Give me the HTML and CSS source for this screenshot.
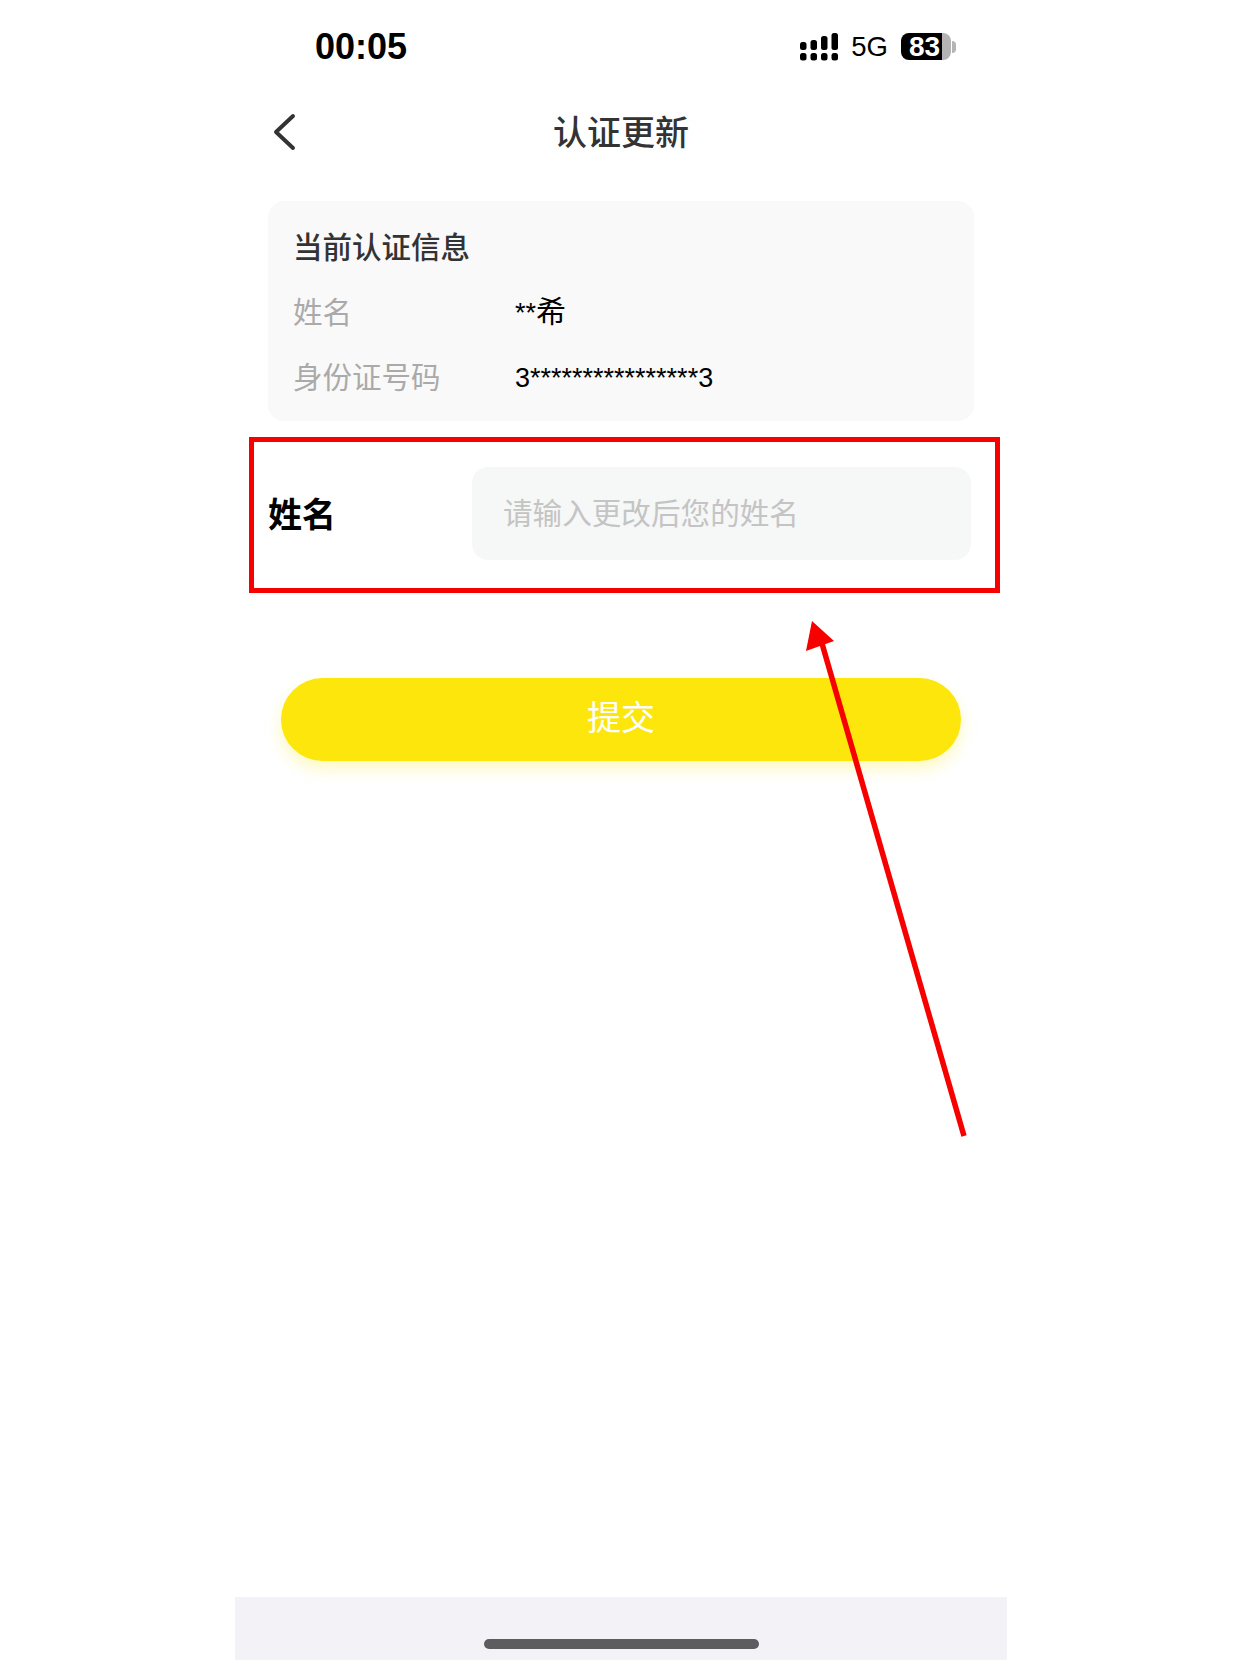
FILE: index.html
```html
<!DOCTYPE html>
<html lang="zh-CN">

<head>
    <meta charset="UTF-8">
    <title>认证更新</title>
    <link rel="stylesheet" href="styles.css">
</head>

<body>
    <div class="phone">
        <div class="statusBar">
            <span class="time">00:05</span>
            <div class="statusRight">
                <svg class="signal" width="38" height="28" viewBox="0 0 38 28">
                    <rect x="0" y="9" width="6.5" height="8" rx="2.5" />
                    <rect x="10.5" y="7" width="6.5" height="10" rx="2.5" />
                    <rect x="21" y="3" width="6.5" height="14" rx="2.5" />
                    <rect x="31.5" y="0" width="6.5" height="17" rx="2.5" />
                    <rect x="0" y="20" width="6.5" height="7.5" rx="2.5" />
                    <rect x="10.5" y="20" width="6.5" height="7.5" rx="2.5" />
                    <rect x="21" y="20" width="6.5" height="7.5" rx="2.5" />
                    <rect x="31.5" y="20" width="6.5" height="7.5" rx="2.5" />
                </svg>
                <span class="net">5G</span>
                <div class="battery">
                    <div class="batteryBody"><span class="batteryNum">83</span></div>
                    <div class="batteryNub"></div>
                </div>
            </div>
        </div>

        <div class="nav">
            <svg class="backIcon" width="24" height="38" viewBox="0 0 24 38">
                <path d="M21 3 L4 19 L21 35" />
            </svg>
            <span class="navTitle">认证更新</span>
        </div>

        <div class="infoCard">
            <div class="infoTitle">当前认证信息</div>
            <div class="infoRow">
                <span class="infoLabel">姓名</span>
                <span class="infoValue">**<span class="infoHan">希</span></span>
            </div>
            <div class="infoRow">
                <span class="infoLabel">身份证号码</span>
                <span class="infoValue">3****************3</span>
            </div>
        </div>

        <div class="formBox">
            <span class="formLabel">姓名</span>
            <div class="formInput">请输入更改后您的姓名</div>
        </div>

        <div class="submitBtn">提交</div>

        <div class="spacer"></div>

        <div class="homeBar">
            <div class="homeIndicator"></div>
        </div>

        <!-- 标注箭头 -->
        <svg class="arrow" width="772" height="1660" viewBox="0 0 772 1660">
            <line x1="729" y1="1136" x2="586" y2="640" />
            <polygon points="577,621 571,651 599,641" />
        </svg>
    </div>
</body>

</html>
```

FILE: styles.css
```css
* {
    margin: 0;
    padding: 0;
    box-sizing: border-box;
}

body {
    background-color: #fff;
    font-family: "Liberation Sans", "Noto Sans CJK SC", sans-serif;
    overflow: hidden;
}

.phone {
    position: relative;
    width: 772px;
    height: 1660px;
    margin: 0 auto;
    display: flex;
    flex-direction: column;
    background-color: #fff;
}

.statusBar {
    height: 93px;
    padding: 0 51px 0 80px;
    display: flex;
    justify-content: space-between;
    align-items: center;
}

.time {
    font-size: 36px;
    font-weight: 700;
    color: #000;
}

.statusRight {
    display: flex;
    align-items: center;
}

.signal {
    fill: #000;
    margin-right: 13px;
}

.net {
    font-size: 27.5px;
    color: #000;
    margin-right: 13px;
}

.battery {
    display: flex;
    align-items: center;
}

.batteryBody {
    width: 50px;
    height: 27px;
    border-radius: 8px;
    background: linear-gradient(to right, #000 82%, #b4b4b4 82%);
    display: flex;
    align-items: center;
    padding-left: 8px;
}

.batteryNum {
    font-size: 28px;
    font-weight: 700;
    color: #fff;
    line-height: 27px;
}

.batteryNub {
    width: 4px;
    height: 12px;
    margin-left: 1px;
    border-radius: 0 4px 4px 0;
    background-color: #b4b4b4;
}

.nav {
    height: 78px;
    position: relative;
    display: flex;
    justify-content: center;
    align-items: center;
}

.backIcon {
    position: absolute;
    left: 37px;
    top: 20px;
    fill: none;
    stroke: #333;
    stroke-width: 4;
    stroke-linecap: round;
    stroke-linejoin: round;
}

.navTitle {
    font-size: 34px;
    font-weight: 500;
    color: #333;
    line-height: 40px;
    margin-top: 2px;
}

.infoCard {
    width: 706px;
    height: 220px;
    margin: 30px 0 0 33px;
    padding: 26px 25px 0;
    background-color: #f9f9f9;
    border-radius: 16px;
}

.infoTitle {
    font-size: 29.5px;
    font-weight: 500;
    color: #333;
    line-height: 42px;
    margin-bottom: 11px;
}

.infoRow {
    height: 65px;
    display: flex;
    align-items: center;
}

.infoLabel {
    width: 222px;
    font-size: 29.5px;
    line-height: 36px;
    color: #aaa;
}

.infoValue {
    font-size: 27px;
    line-height: 36px;
    color: #000;
}

.infoHan {
    font-size: 30px;
}

.formBox {
    width: 751px;
    height: 156px;
    margin: 16px 0 0 14px;
    padding: 0 24px 4px 14px;
    border: 5px solid #f60000;
    display: flex;
    justify-content: space-between;
    align-items: center;
}

.formLabel {
    font-size: 34px;
    font-weight: 700;
    color: #000;
    margin-bottom: 2px;
}

.formInput {
    width: 499px;
    height: 93px;
    padding-left: 31px;
    background-color: #f6f7f7;
    border-radius: 16px;
    font-size: 29.6px;
    line-height: 93px;
    color: #c4c4c4;
}

.submitBtn {
    width: 680px;
    height: 83px;
    margin: 85px 0 0 46px;
    background-color: #fde60c;
    border-radius: 42px;
    box-shadow: 0 8px 16px rgba(253, 230, 12, 0.25);
    font-size: 34px;
    color: #fff;
    line-height: 80px;
    text-align: center;
}

.spacer {
    flex: 1;
}

.homeBar {
    height: 63px;
    padding-top: 42px;
    background-color: #f3f3f7;
    display: flex;
    justify-content: center;
}

.homeIndicator {
    width: 275px;
    height: 10px;
    border-radius: 5px;
    background-color: #5d5d5f;
}

.arrow {
    position: absolute;
    left: 0;
    top: 0;
    pointer-events: none;
    fill: #f60000;
    stroke: none;
}

.arrow line {
    stroke: #f60000;
    stroke-width: 5.5;
}
```
